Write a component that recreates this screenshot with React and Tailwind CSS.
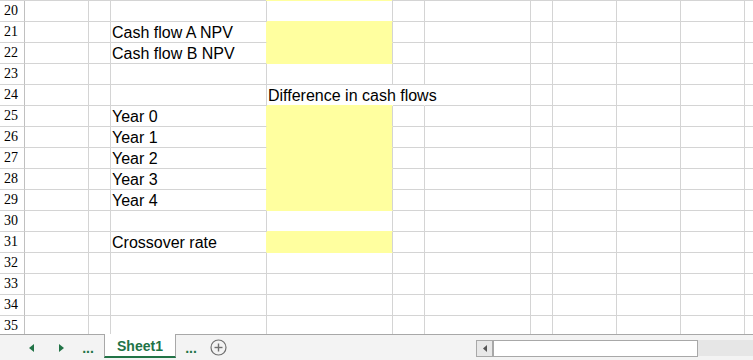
import React from "react";

const YEL = "bg-[#ffff9f]";

const colW = [
  "w-[64px]",
  "w-[22px]",
  "w-[156px]",
  "w-[126px]",
  "w-[32px]",
  "w-[106px]",
  "w-[22px]",
  "w-[64px]",
  "w-[64px]",
  "w-[64px]",
];

const data = {
  20: {},
  21: { c: "Cash flow A NPV", y: true },
  22: { c: "Cash flow B NPV", y: true },
  23: {},
  24: { d: "Difference in cash flows" },
  25: { c: "Year 0", y: true },
  26: { c: "Year 1", y: true },
  27: { c: "Year 2", y: true },
  28: { c: "Year 3", y: true },
  29: { c: "Year 4", y: true },
  30: {},
  31: { c: "Crossover rate", y: true },
  32: {},
  33: {},
  34: {},
  35: {},
};

function Row({ n }) {
  const r = data[n];
  const next = data[n + 1] || {};
  const yellow = !!r.y;
  const dBottomYellow = yellow || !!next.y;
  return (
    <div className="flex h-[21px] shrink-0">
      <div className="w-[25px] shrink-0 border-r border-r-[#c0c0c0] border-b border-b-[#d4d4d4] pl-[4px] pt-[3px] font-['Liberation_Serif','Times_New_Roman',serif] text-[14px] leading-[14px] text-black">
        {n}
      </div>
      {colW.map((w, i) => {
        let cls = `${w} shrink-0 border-r border-b relative`;
        let rightC = "border-r-[#d4d4d4]";
        let botC = "border-b-[#d4d4d4]";
        let bg = "";
        let content = null;
        if (i === 2) {
          if (yellow) rightC = "border-r-[#ffff9f]";
          if (r.c)
            content = (
              <div className="absolute left-0 bottom-0 pl-[1px] whitespace-nowrap text-[16px] leading-[18px] text-black">
                {r.c}
              </div>
            );
        }
        if (i === 3) {
          if (yellow) bg = YEL;
          if (dBottomYellow) botC = "border-b-[#ffff9f]";
          if (r.d) {
            rightC = "border-r-transparent";
            content = (
              <div className="absolute left-0 bottom-0 pl-[1px] whitespace-nowrap text-[16px] leading-[18px] text-black">
                {r.d}
              </div>
            );
          }
        }
        if (i === 4 && r.d) rightC = "border-r-transparent";
        return (
          <div key={i} className={`${cls} ${rightC} ${botC} ${bg}`}>
            {content}
          </div>
        );
      })}
      <div className="flex-1 border-b border-b-[#d4d4d4]" />
    </div>
  );
}

export default function App() {
  const rows = [];
  for (let i = 20; i <= 35; i++) rows.push(i);
  return (
    <div className="w-[753px] h-[360px] overflow-hidden bg-white flex flex-col font-['Liberation_Sans',Arial,sans-serif]">
      <div className="h-[334px] shrink-0 overflow-hidden flex flex-col">
        <div className="flex h-px shrink-0 bg-[#d4d4d4]">
          <div className="ml-[266px] w-[126px] bg-[#ffff9f]" />
        </div>
        {rows.map((n) => (
          <Row key={n} n={n} />
        ))}
      </div>
      <div className="h-[26px] shrink-0 border-t border-[#a8a8a8] bg-[#f3f3f3] flex items-start">
        <div className="flex items-center h-[25px]">
          <svg width="5" height="8" viewBox="0 0 5 8" className="ml-[29px]">
            <polygon points="5,0 5,8 0,4" fill="#217346" />
          </svg>
          <svg width="5" height="8" viewBox="0 0 5 8" className="ml-[25px]">
            <polygon points="0,0 0,8 5,4" fill="#217346" />
          </svg>
          <div className="w-[32px] ml-[8px] flex justify-center text-[14px] leading-[16px] font-bold text-[#217346]">
            ...
          </div>
        </div>
        <div className="-mt-px h-[24px] w-[72px] shrink-0 bg-white border-l border-r border-[#a8a8a8] border-b-2 border-b-[#217346] flex items-center justify-center pt-[2px] text-[14px] leading-[16px] font-bold text-[#217346]">
          Sheet1
        </div>
        <div className="flex items-center h-[25px]">
          <div className="w-[30px] flex justify-center text-[14px] leading-[16px] font-bold text-[#217346]">
            ...
          </div>
          <svg width="17" height="17" viewBox="0 0 17 17" className="ml-[4px]">
            <circle cx="8.5" cy="8.5" r="7.5" fill="none" stroke="#707070" strokeWidth="1.2" />
            <line x1="8.5" y1="4.5" x2="8.5" y2="12.5" stroke="#707070" strokeWidth="1.4" />
            <line x1="4.5" y1="8.5" x2="12.5" y2="8.5" stroke="#707070" strokeWidth="1.4" />
          </svg>
        </div>
        <div className="ml-auto mt-[5px] flex">
          <div className="w-[17px] h-[17px] border border-[#a8a8a8] bg-[#e8e8e8] flex items-center justify-center">
            <svg width="4" height="7" viewBox="0 0 4 7">
              <polygon points="4,0 4,7 0,3.5" fill="#555555" />
            </svg>
          </div>
          <div className="w-[205px] h-[17px] border border-[#a8a8a8] bg-white" />
          <div className="w-[55px] h-[16px] bg-[#e6e6e6]" />
        </div>
      </div>
    </div>
  );
}
